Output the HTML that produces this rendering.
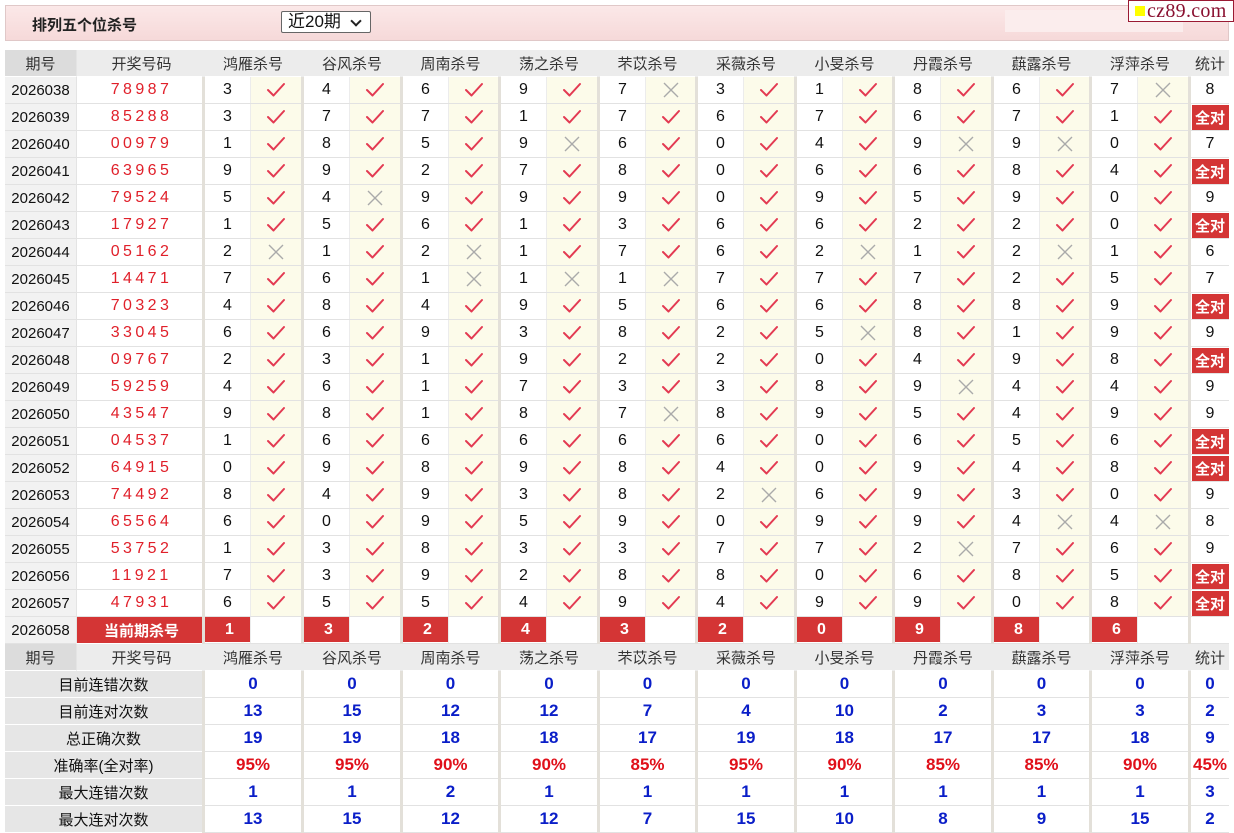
<!DOCTYPE html>
<html><head><meta charset="utf-8"><style>
*{margin:0;padding:0;box-sizing:border-box}
body{width:1234px;height:833px;background:#fff;font-family:"Liberation Sans","Noto Sans CJK SC",sans-serif;font-size:14px;color:#111;position:relative;overflow:hidden}
.top{position:absolute;left:5px;top:5px;width:1224px;height:36px;border:1px solid #e0c8c8;background:linear-gradient(#fbe8e8,#f6d9d9)}
.top .t{position:absolute;left:26px;top:8px;font-weight:bold;font-size:15px;color:#222}
.top .sel{position:absolute;left:275px;top:5px;width:90px;height:22px;border:1px solid #666;background:#fff;border-radius:2px;font-size:17px;padding-left:6px;line-height:20px}
.top .sel:after{content:"";position:absolute;right:10px;top:5px;width:6px;height:6px;border-right:2px solid #222;border-bottom:2px solid #222;transform:rotate(45deg)}
.top .in{position:absolute;left:999px;top:4px;width:178px;height:22px;background:#fbeded}
.logo{position:absolute;left:1128px;top:0;width:106px;height:22px;background:#fff;border:1px solid #9a1a33;font-family:"Liberation Serif",serif;font-size:20px;color:#8a1030;line-height:20px;padding-left:18px;letter-spacing:0.3px;white-space:nowrap;overflow:hidden}
.logo:before{content:"";position:absolute;left:6px;top:5px;width:10px;height:10px;background:#ff0}
.tb{position:absolute;left:5px;top:50px;width:1224px}
.r{display:flex;height:27px}
.r>*{height:27px;border-bottom:1px solid #e2e2e2;display:flex;align-items:center;justify-content:center;font-style:normal;font-weight:normal}
.p{width:71px;background:#f2f2f2;font-size:15px}
.n{width:126px;color:#e0202a;font-size:16px;letter-spacing:3.4px;padding-left:4px;border-left:1px solid #e4e4e4}
.g{width:3px;background:#e3e0d9;border-bottom:none!important}
.A{width:96px}.B{width:95px}
.G{display:flex;padding:0!important}
.G>b{height:26px;display:flex;align-items:center;justify-content:center;font-weight:normal}
.G>b:first-child{width:45px;font-size:16px}
.G>b:last-child{flex:1;background:#fcfbea;border-left:1px solid #ececec}
.s{width:38px;font-size:16px}
.h>*{background:#ececec;font-size:15px;color:#333;border-bottom:1px solid #fff}
.h .p{background:#dcdcdc}
.q{background:#d43535;color:#fff;font-weight:bold;font-size:15px;width:37px;height:25px;display:flex;align-items:center;justify-content:center}
.cur .n{background:#d43535;color:#fff;font-weight:bold;letter-spacing:0;font-size:15px;border-bottom:1px solid #fff}
.cur .G>b:first-child{background:#d43535;color:#fff;font-weight:bold;justify-content:flex-start;padding-left:20px;border-bottom:1px solid #fff}
.cur .G>b:last-child{background:#fff}
.st .L{width:197px;background:#e6e6e6;font-size:15px;border-bottom:1px solid #fff}
.st .A,.st .B,.st .s{color:#0a1ec8;font-weight:bold;font-size:17px}
.st.pc .A,.st.pc .B,.st.pc .s{color:#e0101a}
svg{display:block}
</style></head><body>
<svg width="0" height="0" style="position:absolute"><defs>
<symbol id="c" viewBox="0 0 22 18"><path d="M3 9 L8.5 14.5 L19 3" fill="none" stroke="#e33a52" stroke-width="2" stroke-linecap="round" stroke-linejoin="round"/></symbol>
<symbol id="x" viewBox="0 0 18 18"><path d="M2 2 L16 16 M16 2 L2 16" fill="none" stroke="#aaa" stroke-width="1.4"/></symbol>
</defs></svg>
<div class="top"><div class="t">排列五个位杀号</div><div class="sel">近20期</div><div class="in"></div></div>
<div class="logo">cz89.com</div>
<div class="tb" id="tb">
<div class="r h"><i class="p">期号</i><i class="n" style="letter-spacing:0;color:#333;font-size:15px">开奖号码</i><i class="g"></i><i class="A">鸿雁杀号</i><i class="g"></i><i class="A">谷风杀号</i><i class="g"></i><i class="B">周南杀号</i><i class="g"></i><i class="A">荡之杀号</i><i class="g"></i><i class="B">芣苡杀号</i><i class="g"></i><i class="A">采薇杀号</i><i class="g"></i><i class="B">小旻杀号</i><i class="g"></i><i class="A">丹霞杀号</i><i class="g"></i><i class="B">蕻露杀号</i><i class="g"></i><i class="A">浮萍杀号</i><i class="g"></i><i class="s" style="font-size:15px">统计</i></div>
</div>
<script>
var W=["A","A","B","A","B","A","B","A","B","A"];
var D=[
["2026038","78987","3c4c6c9c7x3c1c8c6c7x","8"],
["2026039","85288","3c7c7c1c7c6c7c6c7c1c","全对"],
["2026040","00979","1c8c5c9x6c0c4c9x9x0c","7"],
["2026041","63965","9c9c2c7c8c0c6c6c8c4c","全对"],
["2026042","79524","5c4x9c9c9c0c9c5c9c0c","9"],
["2026043","17927","1c5c6c1c3c6c6c2c2c0c","全对"],
["2026044","05162","2x1c2x1c7c6c2x1c2x1c","6"],
["2026045","14471","7c6c1x1x1x7c7c7c2c5c","7"],
["2026046","70323","4c8c4c9c5c6c6c8c8c9c","全对"],
["2026047","33045","6c6c9c3c8c2c5x8c1c9c","9"],
["2026048","09767","2c3c1c9c2c2c0c4c9c8c","全对"],
["2026049","59259","4c6c1c7c3c3c8c9x4c4c","9"],
["2026050","43547","9c8c1c8c7x8c9c5c4c9c","9"],
["2026051","04537","1c6c6c6c6c6c0c6c5c6c","全对"],
["2026052","64915","0c9c8c9c8c4c0c9c4c8c","全对"],
["2026053","74492","8c4c9c3c8c2x6c9c3c0c","9"],
["2026054","65564","6c0c9c5c9c0c9c9c4x4x","8"],
["2026055","53752","1c3c8c3c3c7c7c2x7c6c","9"],
["2026056","11921","7c3c9c2c8c8c0c6c8c5c","全对"],
["2026057","47931","6c5c5c4c9c4c9c9c0c8c","全对"]];
var h="";
D.forEach(function(d){h+='<div class="r"><i class="p">'+d[0]+'</i><i class="n">'+d[1]+'</i>';
for(var i=0;i<10;i++){var v=d[2][i*2],m=d[2][i*2+1];h+='<i class="g"></i><i class="G '+W[i]+'"><b>'+v+'</b><b>'+(m=="c"?'<svg width="22" height="18"><use href="#c"/></svg>':'<svg width="18" height="18"><use href="#x"/></svg>')+'</b></i>';}
h+='<i class="g"></i><i class="s">'+(d[3]=="全对"?'<span class="q">全对</span>':d[3])+'</i></div>';});
var c="1324320986";
h+='<div class="r cur"><i class="p">2026058</i><i class="n">当前期杀号</i>';
for(var i=0;i<10;i++)h+='<i class="g"></i><i class="G '+W[i]+'"><b>'+c[i]+'</b><b></b></i>';
h+='<i class="g"></i><i class="s"></i></div>';
h+=document.querySelector(".h").outerHTML;
var S=[["目前连错次数","0,0,0,0,0,0,0,0,0,0,0"],["目前连对次数","13,15,12,12,7,4,10,2,3,3,2"],["总正确次数","19,19,18,18,17,19,18,17,17,18,9"],["准确率(全对率)","95%,95%,90%,90%,85%,95%,90%,85%,85%,90%,45%"],["最大连错次数","1,1,2,1,1,1,1,1,1,1,3"],["最大连对次数","13,15,12,12,7,15,10,8,9,15,2"]];
S.forEach(function(s,k){var v=s[1].split(",");h+='<div class="r st'+(k==3?' pc':'')+'"><i class="L">'+s[0]+'</i>';
for(var i=0;i<10;i++)h+='<i class="g"></i><i class="'+W[i]+'">'+v[i]+'</i>';
h+='<i class="g"></i><i class="s">'+v[10]+'</i></div>';});
document.getElementById("tb").insertAdjacentHTML("beforeend",h);
</script>
</body></html>
